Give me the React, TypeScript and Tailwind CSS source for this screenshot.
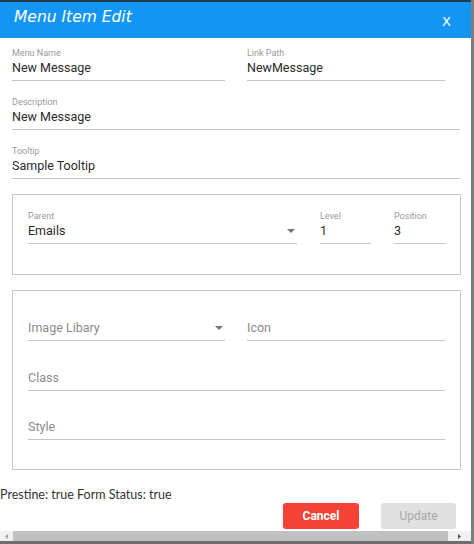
import React from "react";

const Caret: React.FC = () => (
  <svg width="8" height="4" viewBox="0 0 8 4" className="shrink-0">
    <path d="M0 0 L8 0 L4 4 Z" fill="#757575" />
  </svg>
);

type FieldProps = {
  label?: string;
  value?: string;
  placeholder?: string;
  select?: boolean;
  className?: string;
};

const Field: React.FC<FieldProps> = ({ label, value, placeholder, select, className = "" }) => (
  <div className={`flex flex-col ${className}`}>
    {label && <span className="h-3 text-[9px] leading-3 text-[#9a9a9a]">{label}</span>}
    <div className={`flex items-center justify-between border-b border-[#c6c6c6] pb-[4px] ${label ? "mt-[1px]" : ""}`}>
      <span className={`h-4 text-[12.5px] leading-4 ${value ? "text-[#2a2a2a]" : "text-[#8a8a8a]"}`}>
        {value ?? placeholder}
      </span>
      {select && (
        <span className="mr-[2px]">
          <Caret />
        </span>
      )}
    </div>
  </div>
);

export default function App() {
  return (
    <div className="flex h-[544px] w-[474px] overflow-hidden bg-[#7d7d7d] font-['Roboto',sans-serif]">
      <div className="flex w-[471px] flex-col bg-white">
        <div className="h-[2px] bg-[#27394a]" />

        {/* Header */}
        <div className="flex h-[36px] items-center justify-between bg-[#1396f3] pl-[14px] pr-[20px]">
          <h1 className="mb-[4px] font-['DejaVu_Sans',sans-serif] text-[15.5px] italic text-white">Menu Item Edit</h1>
          <span className="mt-[3px] font-['DejaVu_Sans',sans-serif] text-[13px] text-white">X</span>
        </div>

        {/* Body */}
        <div className="flex flex-col px-[12px] pt-[9px]">
          <div className="flex gap-[22px]">
            <Field label="Menu Name" value="New Message" className="w-[213px]" />
            <Field label="Link Path" value="NewMessage" className="w-[198px]" />
          </div>
          <Field label="Description" value="New Message" className="mt-[15px] w-[448px]" />
          <Field label="Tooltip" value="Sample Tooltip" className="mt-[15px] w-[448px]" />

          <div className="mt-[15px] flex h-[81px] w-[449px] gap-[23px] border border-[#c6c6c6] pl-[15px] pr-[14px] pt-[15px]">
            <Field label="Parent" value="Emails" select className="w-[269px]" />
            <Field label="Level" value="1" className="w-[51px]" />
            <Field label="Position" value="3" className="w-[52px]" />
          </div>

          <div className="mt-[15px] flex h-[180px] w-[449px] flex-col border border-[#c6c6c6] pl-[15px] pr-[14px] pt-[29px]">
            <div className="flex gap-[22px]">
              <Field placeholder="Image Libary" select className="w-[197px]" />
              <Field placeholder="Icon" className="w-[198px]" />
            </div>
            <Field placeholder="Class" className="mt-[29px] w-[417px]" />
            <Field placeholder="Style" className="mt-[28px] w-[417px]" />
          </div>
        </div>

        <p className="mt-[17px] font-['Lato',sans-serif] text-[12.5px] leading-4 text-[#333]">
          Prestine: true Form Status: true
        </p>

        <div className="flex justify-end gap-[22px] pr-[15px]">
          <button className="h-[26px] w-[76px] rounded-[3px] bg-[#f44336] text-[12px] font-bold text-white">
            Cancel
          </button>
          <button className="h-[26px] w-[75px] rounded-[3px] bg-[#e0e0e0] text-[12px] text-[#a8a8a8]">
            Update
          </button>
        </div>

        {/* Scrollbar */}
        <div className="mt-[2px] flex h-[10px] items-center bg-[#f0f0f0]">
          <span className="flex w-[13px] justify-center">
            <svg width="3" height="5" viewBox="0 0 3 5">
              <path d="M3 0 L0 2.5 L3 5 Z" fill="#a3a3a3" />
            </svg>
          </span>
          <div className="h-[10px] w-[435px] bg-[#c1c1c1]" />
          <span className="flex flex-1 justify-center">
            <svg width="3" height="5" viewBox="0 0 3 5">
              <path d="M0 0 L3 2.5 L0 5 Z" fill="#505050" />
            </svg>
          </span>
        </div>
        <div className="flex-1 bg-[#6e6e6e]" />
      </div>
    </div>
  );
}
